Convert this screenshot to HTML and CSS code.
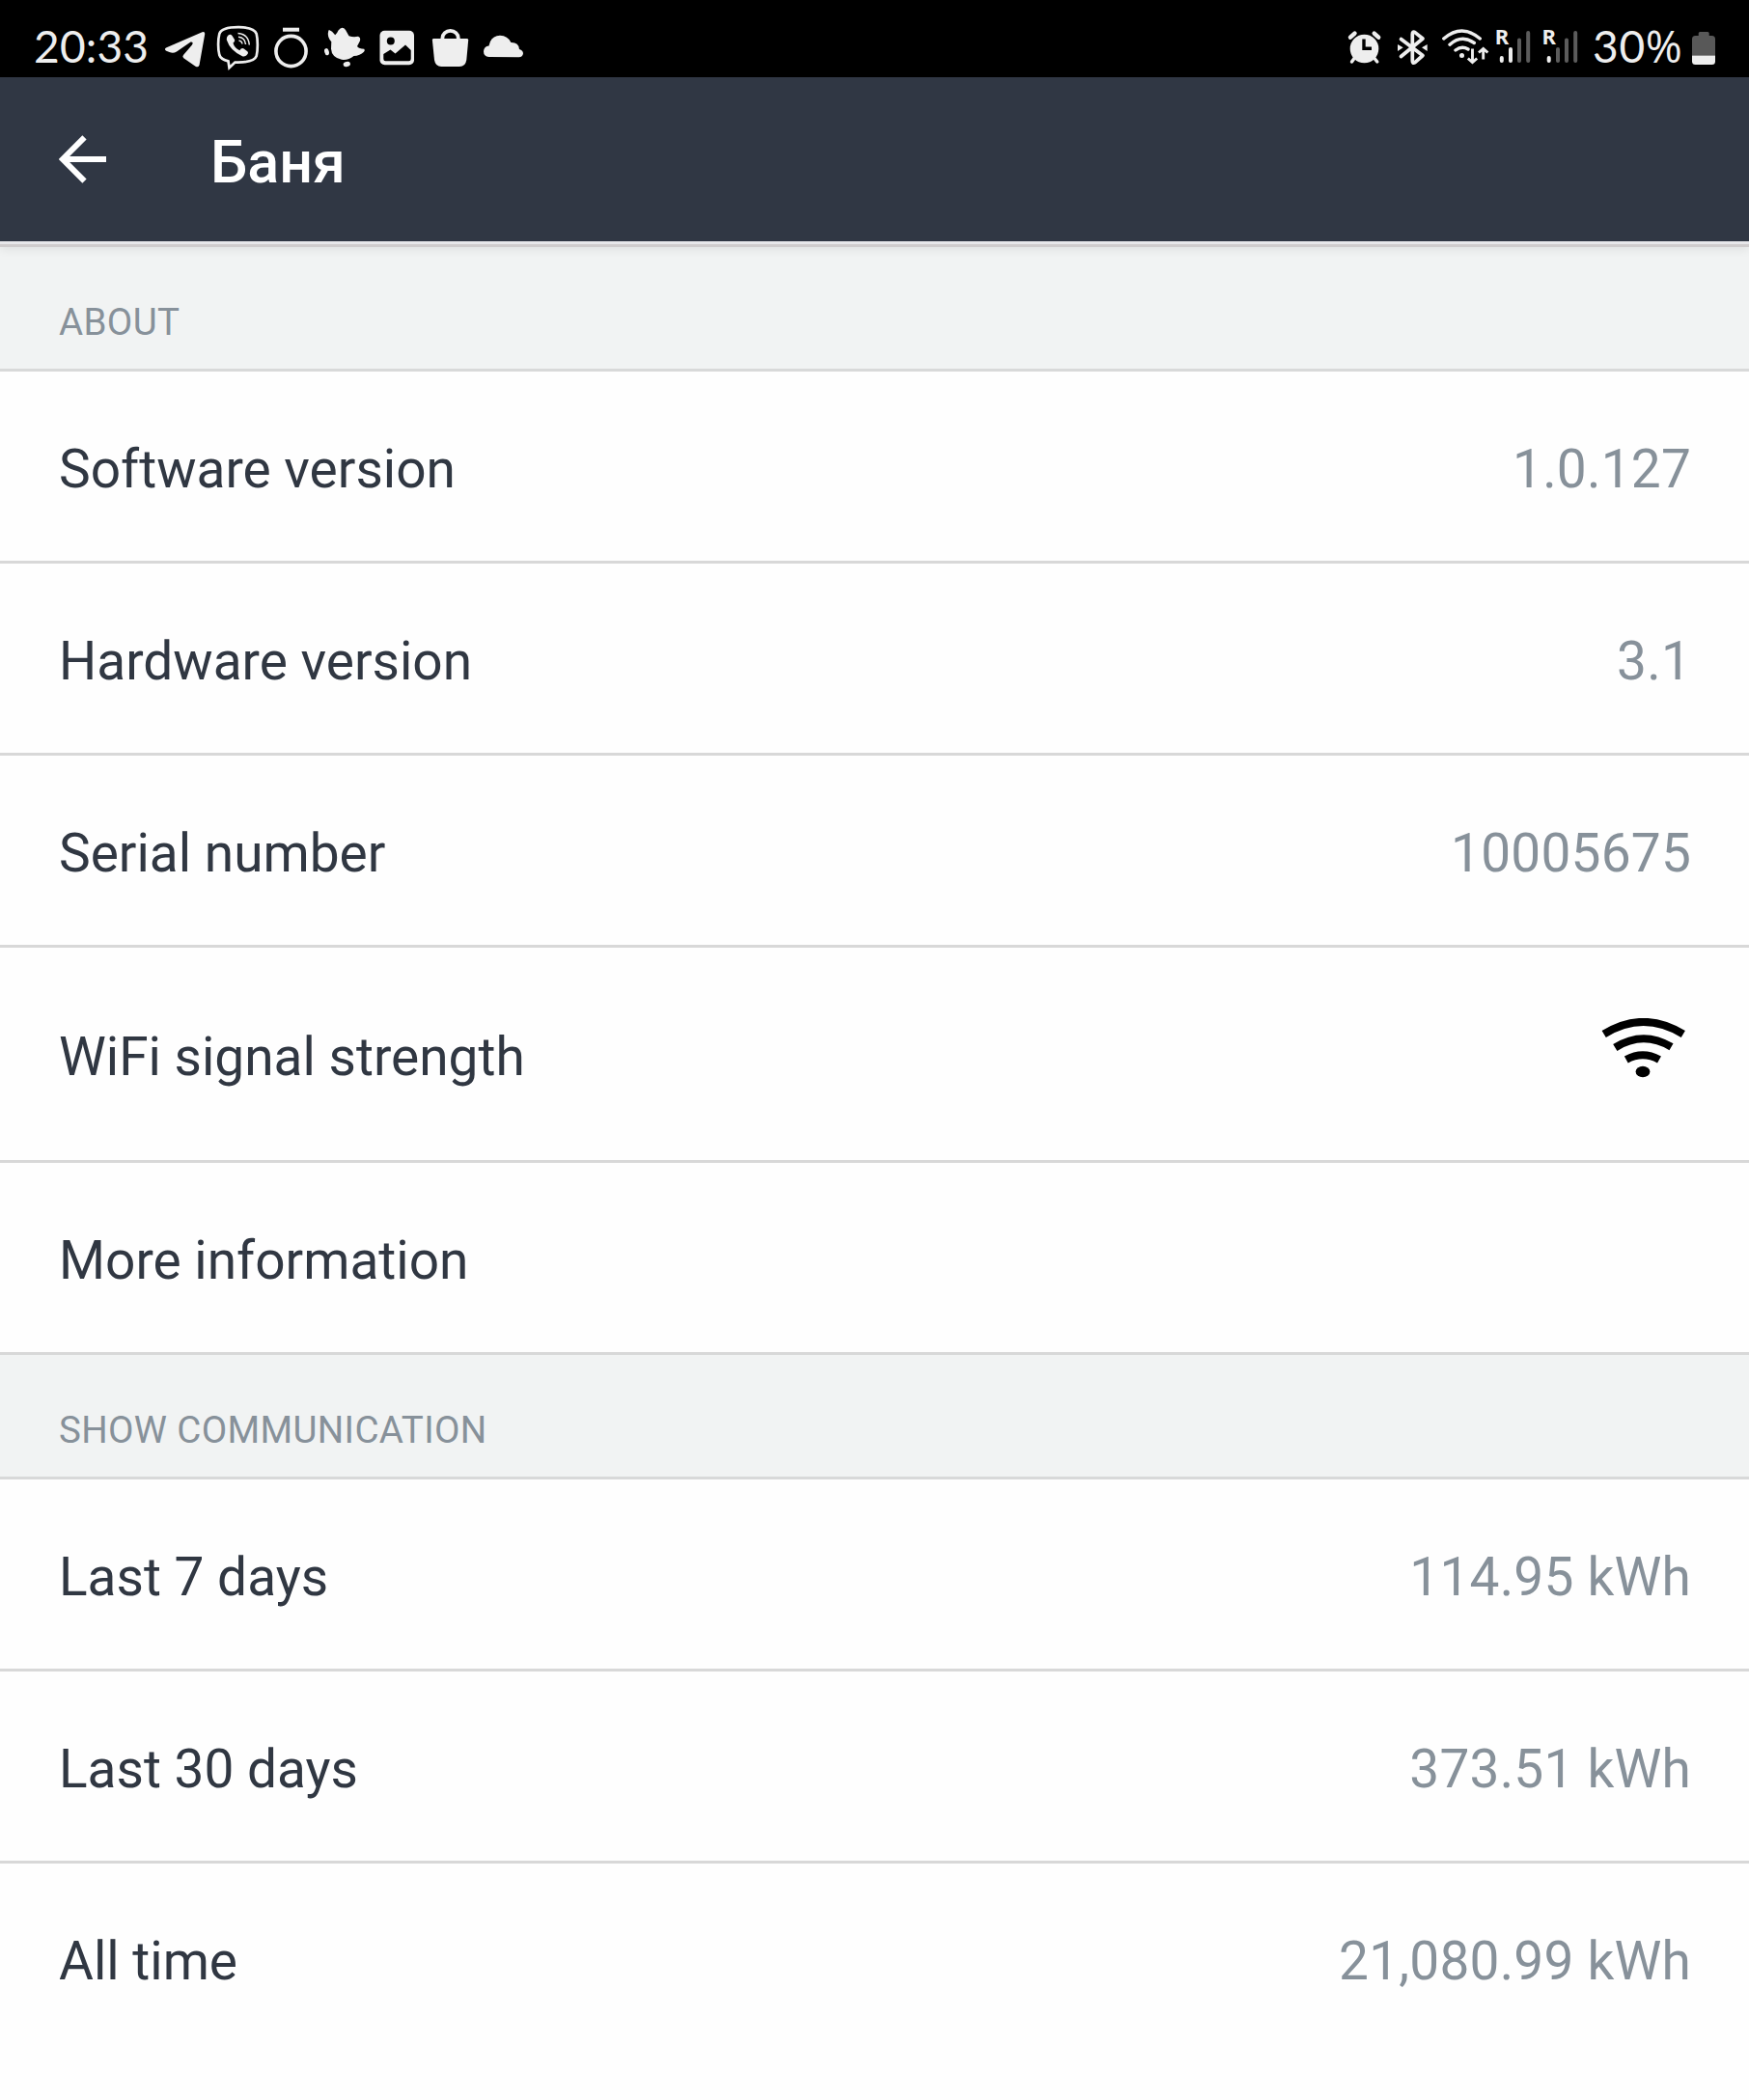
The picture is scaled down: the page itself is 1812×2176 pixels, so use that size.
FILE: index.html
```html
<!DOCTYPE html>
<html lang="en">
	<head>
		<meta charset="utf-8" />
		<title>Баня</title>
		<link rel="stylesheet" href="styles.css">
	</head>
	<body>
		<!--status bar-->
		<div class="status">
			<span class="clock">20:33</span>
			<!--telegram-->
			<svg width="50" height="80" viewBox="168 0 50 80">
				<path d="M172 49.5L209.5 33.2Q212.8 32.3 212.2 35.5L206.5 67.5Q205.7 70.3 202.5 68.7L190.3 60.2Q188.5 58.8 190 57L199 46.5Q200.8 43.2 197.5 43.6L183 53.5Q179.5 55.6 175.5 54L172.3 52.8Q169.8 51 172 49.5Z"/>
			</svg>
			<!--viber-->
			<svg width="58" height="80" viewBox="218 0 58 80">
				<path class="line" d="M246.5 28.2C258 28 264 30.5 265.7 35C267.2 41 267.2 52 265.7 58C264 62.5 258 64.6 246.5 64.6L243.5 64.6L237.5 70.3L236.5 63.4C231 62 228.4 60.5 227.3 57C225.7 51 225.7 41 227.3 35C229 30.5 235 28.2 246.5 28.2Z" stroke-width="2.7"/>
				<path d="M236.5 36.5Q238.7 34.7 240.5 37L243 41Q243.8 42.8 241.5 44.6Q242.5 49.5 248.3 52.3Q250 49.3 252.3 50.3L256 53Q257.8 54.5 256.3 56.3Q254 59.3 251 58.2Q238.5 52.5 234.9 41.5Q234.3 38.5 236.5 36.5Z"/>
				<path class="line" d="M246.5 34.5Q257.5 35.5 258.3 46.5M247 38.3Q253.8 39 254.5 46M247.5 42Q250.5 42.3 251 45.5" stroke-width="1.5"/>
			</svg>
			<!--ring-->
			<svg width="54" height="80" viewBox="276 0 54 80">
				<rect x="293" y="28.7" width="17" height="4"/>
				<circle class="line" cx="301.5" cy="53" r="15.6" stroke-width="3.6"/>
			</svg>
			<!--leaf-->
			<svg width="56" height="80" viewBox="330 0 56 80">
				<path d="M341 31Q344 32 347.2 36.3Q349 35 350.5 31.5Q354.5 26.5 358 31L361.5 37.2Q366 39 371 37.8Q373.8 38.8 373 42.2L370 48Q372 50.6 377.3 50.8Q378.5 52.3 377 53.7Q373 57.8 366.5 58Q361 62.5 354 61.8Q343.5 59.5 343 50.5L343.3 43.3Q338.5 38 340.3 31.8Z"/>
				<ellipse cx="338.5" cy="53.7" rx="2.3" ry="3.7" transform="rotate(-15 338.5 53.7)"/>
				<ellipse cx="359.3" cy="66.5" rx="3.7" ry="2.5" transform="rotate(-12 359.3 66.5)"/>
			</svg>
			<!--gallery-->
			<svg width="52" height="80" viewBox="386 0 52 80">
				<rect x="393.5" y="31.8" width="35.5" height="35.4" rx="5"/>
				<circle class="hole" cx="404.8" cy="42.5" r="4"/>
				<path class="hole" d="M397.3 56L404.5 51.5L409.5 55.5L420 46.5L425.7 52V61Q425.7 63.3 423.5 63.3H399.5Q397.3 63.3 397.3 61Z"/>
			</svg>
			<!--bag-->
			<svg width="56" height="80" viewBox="438 0 56 80">
				<path class="line" d="M458.4 42V39.5A8.2 7.6 0 0 1 474.8 39.5V42" stroke-width="3.8"/>
				<path d="M449 40H484Q485.3 40 485.2 41.5L483.3 62Q482.4 69 476 69H457.3Q451 69 450 62L447.9 41.5Q447.8 40 449 40Z"/>
			</svg>
			<!--cloud-->
			<svg width="56" height="80" viewBox="494 0 56 80">
				<path d="M506.5 59Q501 58.5 501 53.3Q501.3 48 506.5 47.5Q508.3 37.3 518 36.8Q526 37 529.4 44Q537.5 43.8 538 51Q542 52 542 55.5Q541.5 59 537.5 59.2Z"/>
			</svg>

			<span class="space"></span>

			<!--alarm-->
			<svg width="48" height="80" viewBox="1390 0 48 80">
				<circle cx="1413.5" cy="50.5" r="14.8"/>
				<path class="line" d="M1403 60.5L1400.5 64M1424 60.5L1426.8 64" stroke-width="3.4" stroke-linecap="round"/>
				<path class="line" d="M1399 38.7L1403.5 34.6M1423.7 34.6L1428.2 38.7" stroke-width="4.4" stroke-linecap="round"/>
				<path class="cut" d="M1413 40.5V50.3H1421" stroke-width="3.4"/>
			</svg>
			<!--bluetooth-->
			<svg width="48" height="80" viewBox="1438 0 48 80">
				<path class="line" d="M1451.5 40.5L1474 57.5L1466 64.7Q1463.3 66.3 1463.3 63V35.5Q1463.3 32 1466 33.6L1474 40L1451.5 58.5" stroke-width="3.7" stroke-linecap="round" stroke-linejoin="round"/>
				<path d="M1448 46L1453.7 49.3L1448 53ZM1478.7 46L1473 49.3L1478.7 53Z"/>
			</svg>
			<!--wifi-->
			<svg width="60" height="80" viewBox="1486 0 60 80">
				<path class="line" d="M1495.8 40Q1514.5 24 1533.3 40M1502 46.2Q1514.5 35.2 1527.3 44.5M1508 52Q1514.5 47 1521 51" stroke-width="3.4" stroke-linecap="round"/>
				<circle cx="1514.5" cy="57.5" r="2.5"/>
				<path class="line" d="M1525.5 50.5V64M1520.8 60.5L1525.5 64.5L1530.2 60.5M1536.7 61.5V51M1532 54.5L1536.7 50.5L1541.4 54.5" stroke-width="2.9"/>
			</svg>
			<!--sim 1-->
			<svg width="49" height="80" viewBox="1546 0 49 80">
				<text class="roam" x="1548.7" y="45.5">R</text>
				<path class="line" d="M1555.8 60V63M1565 51V63" stroke-width="4" stroke-linecap="round"/>
				<path class="dim" d="M1574 41.5V63M1583.2 34V63"/>
			</svg>
			<!--sim 2-->
			<svg width="49" height="80" viewBox="1595 0 49 80">
				<text class="roam" x="1597.5" y="45.5">R</text>
				<path class="line" d="M1604.7 60V63" stroke-width="4" stroke-linecap="round"/>
				<path class="dim" d="M1614 51V63M1623 41.5V63M1632.2 34V63"/>
			</svg>
			<span class="percent">30<span class="sign">%</span></span>
			<!--battery-->
			<svg width="62" height="80" viewBox="1750 0 62 80">
				<path class="cell" d="M1759.7 37V34.5Q1759.7 33 1761.2 33H1769.2Q1770.7 33 1770.7 34.5V37H1773.5Q1777 37 1777 40.5V57.5H1753V40.5Q1753 37 1756.5 37Z"/>
				<path d="M1753 57.5H1777V63.5Q1777 67 1773.5 67H1756.5Q1753 67 1753 63.5Z"/>
			</svg>
		</div>

		<!--title bar-->
		<div class="header">
			<svg class="back" width="50" height="50" viewBox="0 0 50 50">
				<path d="M26.5 2.4L4 25L26.5 47.6M4 25H49"/>
			</svg>
			<h1>Баня</h1>
		</div>

		<div class="section">ABOUT</div>
		<ul class="list">
			<li><span>Software version</span><span class="value">1.0.127</span></li>
			<li><span>Hardware version</span><span class="value">3.1</span></li>
			<li><span>Serial number</span><span class="value">10005675</span></li>
			<li class="signal">
				<span>WiFi signal strength</span>
				<svg width="88" height="62" viewBox="0 0 88 62">
					<path d="M2.7 16.5Q43.5 -8.7 84.8 16.5M14.3 30.5Q43.3 12.5 72.5 29.8M25.8 43Q43 33.5 60 43"/>
					<ellipse cx="43" cy="55.5" rx="7.4" ry="5.7"/>
				</svg>
			</li>
			<li><span>More information</span></li>
		</ul>

		<div class="section">SHOW COMMUNICATION</div>
		<ul class="list">
			<li><span>Last 7 days</span><span class="value">114.95 kWh</span></li>
			<li><span>Last 30 days</span><span class="value">373.51 kWh</span></li>
			<li><span>All time</span><span class="value">21,080.99 kWh</span></li>
		</ul>
	</body>
</html>
```
FILE: styles.css
```css
*{
	margin: 0;
	padding: 0;
	box-sizing: border-box;
}
body{
	height: 2176px;
	overflow: hidden;
	background-color: #fefefe;
	color: #303742;
	font-family: Roboto, sans-serif;
	font-size: 55px;
}
/* status bar */
.status{
	display: flex;
	height: 80px;
	background-color: #000;
	color: #eee;
	font-family: Lato, sans-serif;
	font-size: 46px;
	line-height: 80px;
}
.status svg{
	flex: none;
	fill: #eee;
}
.clock{
	width: 168px;
	padding: 8px 0 0 35px;
	letter-spacing: 0.2px;
}
.space{
	flex: 1;
}
.percent{
	width: 106px;
	padding: 8px 0 0 6px;
	white-space: nowrap;
	letter-spacing: 0.7px;
}
.sign{
	font-family: "Open Sans", sans-serif;
	line-height: 1;
}
.status .line{
	fill: none;
	stroke: #eee;
}
.status .cut{
	fill: none;
	stroke: #000;
}
.status .hole{
	fill: #000;
}
.status .dim{
	fill: none;
	stroke: #5c5c5c;
	stroke-width: 4;
	stroke-linecap: round;
}
.status .cell{
	fill: #585858;
}
.roam{
	font: bold 22px "Noto Sans", sans-serif;
}
/* title bar */
.header{
	display: flex;
	align-items: center;
	height: 176px;
	padding: 2px 61px 0;
	background-color: #303744;
	border-bottom: 3px solid #cfcccd;
	box-shadow: inset 0 -3px #e7e7ea, 0 3px 9px rgba(0, 0, 0, 0.07);
	position: relative;
}
.back{
	margin-top: -5px;
	fill: none;
	stroke: #fff;
	stroke-width: 6;
}
.header h1{
	margin-left: 107px;
	color: #fff;
	font-size: 61px;
	font-weight: 500;
}
/* section titles */
.section{
	height: 129px;
	padding: 27px 61px 0;
	border-bottom: 3px solid #d8d9d9;
	background-color: #f1f3f3;
	color: #87919a;
	font-size: 38.5px;
	line-height: 102px;
	letter-spacing: 0.35px;
}
/* rows */
.list{
	list-style: none;
}
.list li{
	display: flex;
	justify-content: space-between;
	align-items: center;
	height: 199px;
	padding: 6px 60px 0 61px;
	border-bottom: 3px solid #d8d8d8;
}
.list:last-child li:last-child{
	border-color: transparent;
}
.list .signal{
	height: 223px;
}
.value{
	color: #87919a;
	letter-spacing: 0.2px;
}
.signal svg{
	margin: -19px 5px 0 0;
}
.signal path{
	fill: none;
	stroke: #000;
	stroke-width: 8;
}
```
